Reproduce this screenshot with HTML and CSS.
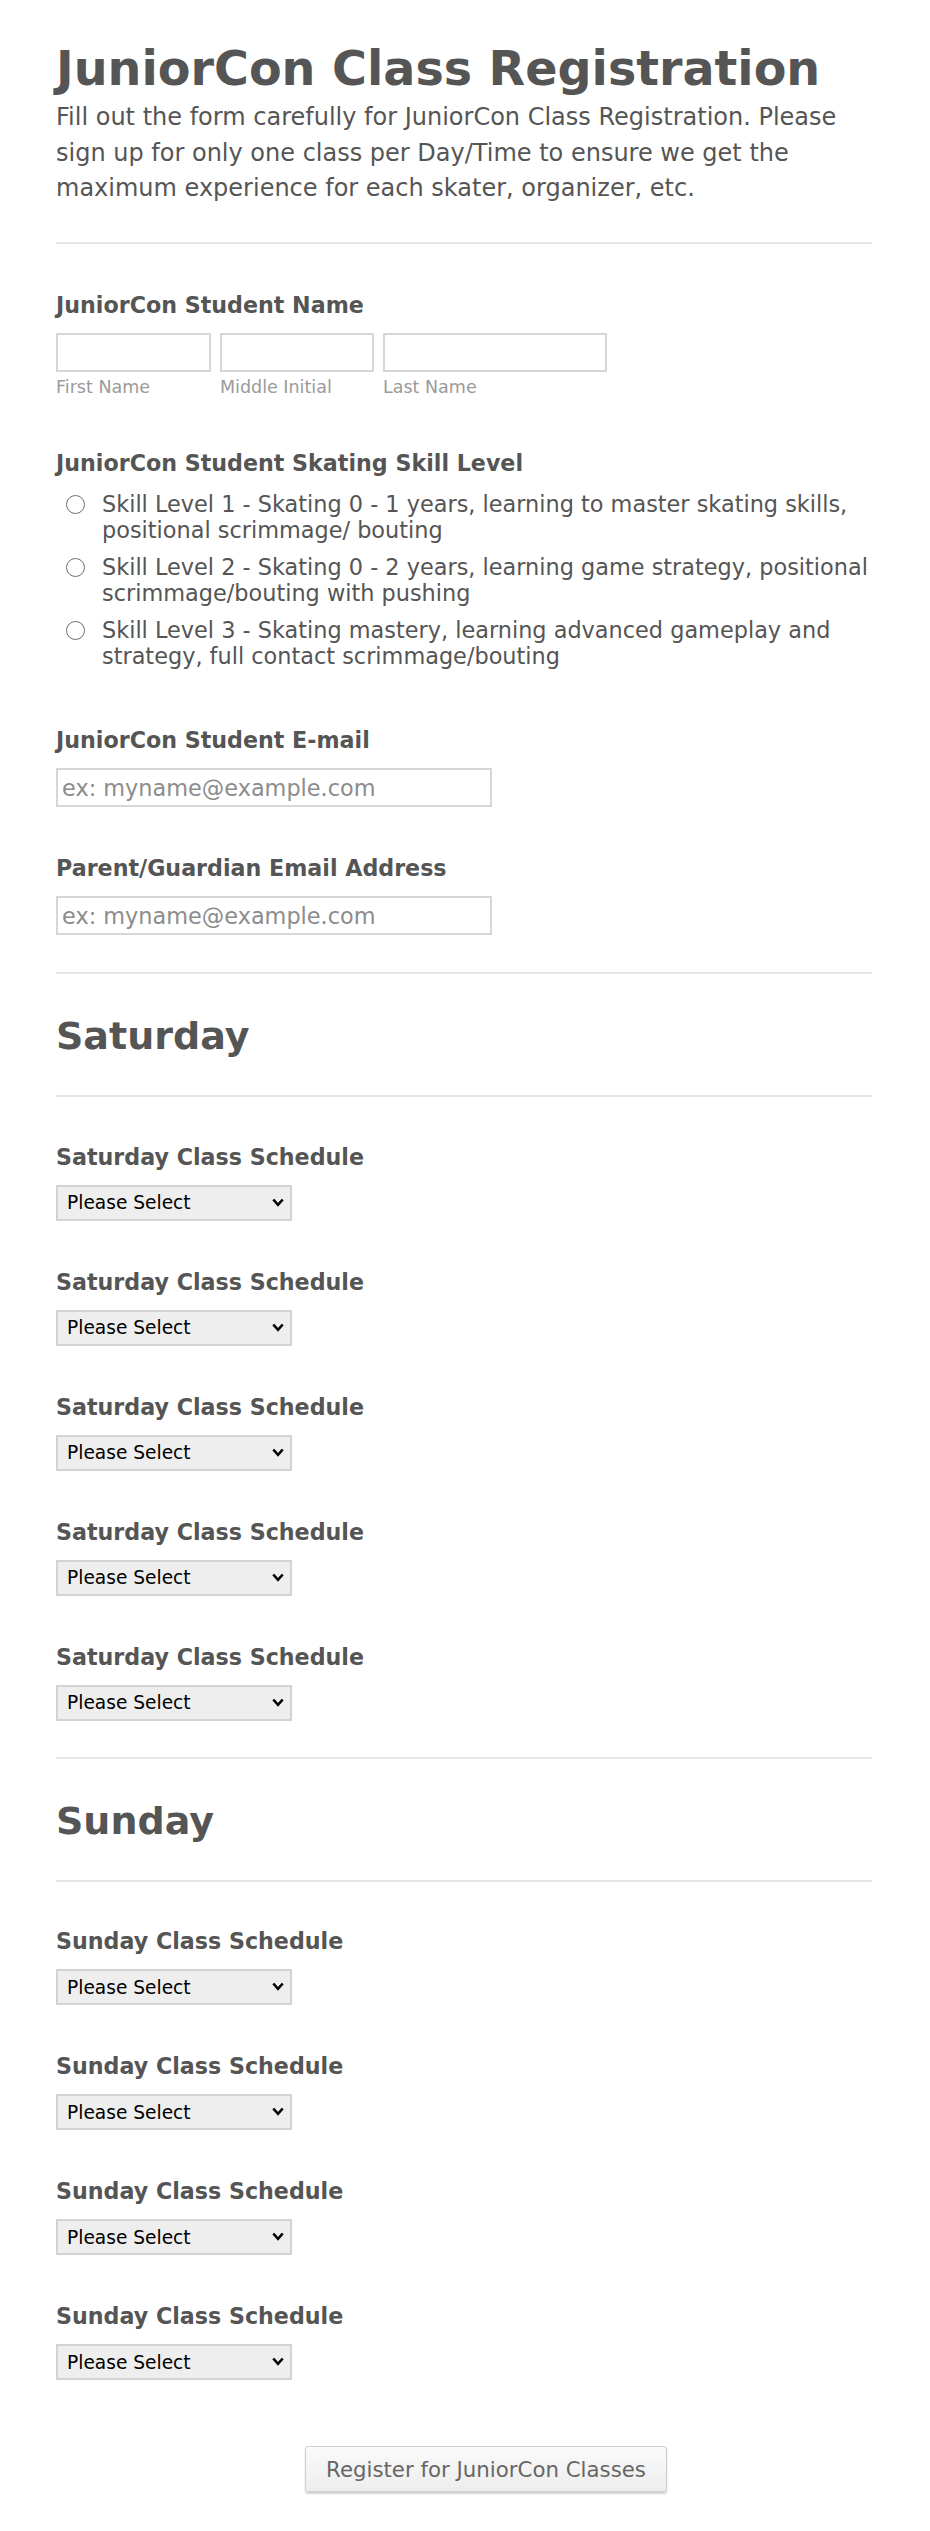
FILE: index.html
```html
<!DOCTYPE html>
<html lang="en">
<head>
<meta charset="utf-8">
<title>JuniorCon Class Registration</title>
<link rel="stylesheet" href="styles.css">
</head>
<body>
<form class="form">
  <header class="header">
    <h1 class="title">JuniorCon Class Registration</h1>
    <p class="desc">Fill out the form carefully for JuniorCon Class Registration. Please sign up for only one class per Day/Time to ensure we get the maximum experience for each skater, organizer, etc.</p>
  </header>
  <hr class="divider divider-top">

  <div class="fields">
    <div class="field">
      <label class="label">JuniorCon Student Name</label>
      <div class="name-row">
        <div class="name-col col-first">
          <input class="text-input" type="text">
          <span class="sublabel">First Name</span>
        </div>
        <div class="name-col col-middle">
          <input class="text-input" type="text">
          <span class="sublabel">Middle Initial</span>
        </div>
        <div class="name-col col-last">
          <input class="text-input" type="text">
          <span class="sublabel">Last Name</span>
        </div>
      </div>
    </div>

    <div class="field">
      <label class="label">JuniorCon Student Skating Skill Level</label>
      <div class="radio-list">
        <label class="radio-item"><input class="radio" type="radio" name="skill"><span>Skill Level 1 - Skating 0 - 1 years, learning to master skating skills, positional scrimmage/ bouting</span></label>
        <label class="radio-item"><input class="radio" type="radio" name="skill"><span>Skill Level 2 - Skating 0 - 2 years, learning game strategy, positional scrimmage/bouting with pushing</span></label>
        <label class="radio-item"><input class="radio" type="radio" name="skill"><span>Skill Level 3 - Skating mastery, learning advanced gameplay and strategy, full contact scrimmage/bouting</span></label>
      </div>
    </div>

    <div class="field">
      <label class="label">JuniorCon Student E-mail</label>
      <input class="text-input email-input" type="email" placeholder="ex: myname@example.com">
    </div>

    <div class="field">
      <label class="label">Parent/Guardian Email Address</label>
      <input class="text-input email-input" type="email" placeholder="ex: myname@example.com">
    </div>
  </div>

  <hr class="divider">
  <h2 class="section-title">Saturday</h2>
  <hr class="divider divider-after-title">

  <div class="fields">
    <div class="field">
      <label class="label">Saturday Class Schedule</label>
      <div class="select-wrap"><select class="dropdown"><option>Please Select</option></select><svg class="chevron" viewBox="0 0 12 9" width="12" height="9"><polyline points="1.3,1.5 6,6.8 10.7,1.5" fill="none" stroke="#000" stroke-width="2.6"/></svg></div>
    </div>
    <div class="field">
      <label class="label">Saturday Class Schedule</label>
      <div class="select-wrap"><select class="dropdown"><option>Please Select</option></select><svg class="chevron" viewBox="0 0 12 9" width="12" height="9"><polyline points="1.3,1.5 6,6.8 10.7,1.5" fill="none" stroke="#000" stroke-width="2.6"/></svg></div>
    </div>
    <div class="field">
      <label class="label">Saturday Class Schedule</label>
      <div class="select-wrap"><select class="dropdown"><option>Please Select</option></select><svg class="chevron" viewBox="0 0 12 9" width="12" height="9"><polyline points="1.3,1.5 6,6.8 10.7,1.5" fill="none" stroke="#000" stroke-width="2.6"/></svg></div>
    </div>
    <div class="field">
      <label class="label">Saturday Class Schedule</label>
      <div class="select-wrap"><select class="dropdown"><option>Please Select</option></select><svg class="chevron" viewBox="0 0 12 9" width="12" height="9"><polyline points="1.3,1.5 6,6.8 10.7,1.5" fill="none" stroke="#000" stroke-width="2.6"/></svg></div>
    </div>
    <div class="field">
      <label class="label">Saturday Class Schedule</label>
      <div class="select-wrap"><select class="dropdown"><option>Please Select</option></select><svg class="chevron" viewBox="0 0 12 9" width="12" height="9"><polyline points="1.3,1.5 6,6.8 10.7,1.5" fill="none" stroke="#000" stroke-width="2.6"/></svg></div>
    </div>
  </div>

  <hr class="divider divider-sunday">
  <h2 class="section-title">Sunday</h2>
  <hr class="divider divider-after-title">

  <div class="fields">
    <div class="field">
      <label class="label">Sunday Class Schedule</label>
      <div class="select-wrap"><select class="dropdown"><option>Please Select</option></select><svg class="chevron" viewBox="0 0 12 9" width="12" height="9"><polyline points="1.3,1.5 6,6.8 10.7,1.5" fill="none" stroke="#000" stroke-width="2.6"/></svg></div>
    </div>
    <div class="field">
      <label class="label">Sunday Class Schedule</label>
      <div class="select-wrap"><select class="dropdown"><option>Please Select</option></select><svg class="chevron" viewBox="0 0 12 9" width="12" height="9"><polyline points="1.3,1.5 6,6.8 10.7,1.5" fill="none" stroke="#000" stroke-width="2.6"/></svg></div>
    </div>
    <div class="field">
      <label class="label">Sunday Class Schedule</label>
      <div class="select-wrap"><select class="dropdown"><option>Please Select</option></select><svg class="chevron" viewBox="0 0 12 9" width="12" height="9"><polyline points="1.3,1.5 6,6.8 10.7,1.5" fill="none" stroke="#000" stroke-width="2.6"/></svg></div>
    </div>
    <div class="field">
      <label class="label">Sunday Class Schedule</label>
      <div class="select-wrap"><select class="dropdown"><option>Please Select</option></select><svg class="chevron" viewBox="0 0 12 9" width="12" height="9"><polyline points="1.3,1.5 6,6.8 10.7,1.5" fill="none" stroke="#000" stroke-width="2.6"/></svg></div>
    </div>
  </div>

  <div class="submit-row">
    <button class="submit" type="button">Register for JuniorCon Classes</button>
  </div>
</form>
</body>
</html>
```
FILE: styles.css
```css
html, body {
  margin: 0;
  padding: 0;
  background: #ffffff;
}

body {
  font-family: "DejaVu Sans", Verdana, sans-serif;
  color: #555555;
}

.form {
  padding: 40px 58px 38px 56px;
}

.header {
  display: block;
}

.title {
  margin: 0;
  font-size: 47.6px;
  line-height: 58px;
  font-weight: 700;
  color: #555555;
}

.desc {
  margin: 2px 0 0;
  font-size: 24px;
  line-height: 35.5px;
  color: #555555;
}

.divider {
  border: 0;
  height: 2px;
  background: #e6e6e6;
  margin: 37px 0 0;
}

.divider-top {
  margin-top: 35.5px;
}

.divider-after-title {
  margin-top: 36px;
}

.divider-sunday {
  margin-top: 36px;
}

.fields {
  display: flex;
  flex-direction: column;
  gap: 48px;
  padding-top: 46.5px;
}

.divider-top + .fields {
  padding-top: 48px;
}

.field {
  display: flex;
  flex-direction: column;
  align-items: flex-start;
}

.label {
  font-size: 22.2px;
  line-height: 26px;
  font-weight: 700;
  color: #555555;
}

.name-row {
  display: flex;
  gap: 9px;
  margin-top: 15px;
  padding-bottom: 5px;
}

.name-col {
  display: flex;
  flex-direction: column;
}

.col-first { width: 155px; }
.col-middle { width: 154px; }
.col-last { width: 224px; }

.text-input {
  box-sizing: border-box;
  height: 39px;
  border: 2px solid #d6d6d6;
  border-radius: 0;
  background: #ffffff;
  padding: 0 4px;
  font-family: "DejaVu Sans", Verdana, sans-serif;
  font-size: 22.4px;
  color: #555555;
  outline: none;
  margin: 0;
}

.name-col .text-input {
  width: 100%;
}

.text-input::placeholder {
  color: #8c8c8c;
}

.field > .text-input {
  margin-top: 15px;
}

.email-input {
  width: 436px;
}

.sublabel {
  margin-top: 5px;
  font-size: 17.5px;
  line-height: 20px;
  color: #9a9a9a;
}

.radio-list {
  display: flex;
  flex-direction: column;
  gap: 11px;
  margin-top: 15px;
  margin-right: -10px;
  padding-bottom: 10px;
  align-self: stretch;
}

.radio-item {
  display: flex;
  align-items: flex-start;
  gap: 17px;
  padding-left: 10px;
  font-size: 22.4px;
  line-height: 26px;
  color: #555555;
}

.radio {
  appearance: none;
  -webkit-appearance: none;
  flex: 0 0 auto;
  box-sizing: border-box;
  width: 19px;
  height: 19px;
  margin: 4px 0 0;
  border: 1.6px solid #6e6e6e;
  border-radius: 50%;
  background: #ffffff;
}

.section-title {
  margin: 39px 0 0;
  font-size: 38px;
  line-height: 46px;
  font-weight: 700;
  color: #555555;
}

.select-wrap {
  position: relative;
  margin-top: 15px;
  width: 236px;
  height: 36px;
}

.dropdown {
  appearance: none;
  -webkit-appearance: none;
  box-sizing: border-box;
  display: block;
  width: 236px;
  height: 36px;
  margin: 0;
  border: 2px solid #d3d3d3;
  border-radius: 0;
  background-color: #eeeeee;
  padding: 0 24px 0 9px;
  font-family: "DejaVu Sans", Verdana, sans-serif;
  font-size: 18.6px;
  color: #000000;
  outline: none;
}

.chevron {
  position: absolute;
  right: 8px;
  top: 13px;
  pointer-events: none;
}

.submit-row {
  display: flex;
  justify-content: center;
  padding-left: 44px;
  margin-top: 66px;
}

.submit {
  box-sizing: border-box;
  width: 362px;
  height: 46px;
  border: 1px solid #cfcfcf;
  border-radius: 3px;
  background: linear-gradient(#fafafa, #ededed);
  box-shadow: 0 2px 2px rgba(0, 0, 0, 0.18);
  font-family: "DejaVu Sans", Verdana, sans-serif;
  font-size: 21.3px;
  color: #666666;
  padding: 0;
}
```
